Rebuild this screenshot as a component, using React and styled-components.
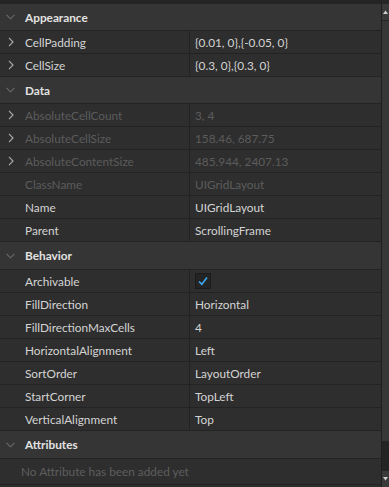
import React from 'react';
import styled, { createGlobalStyle } from 'styled-components';

const Global = createGlobalStyle`
  html, body { margin: 0; padding: 0; background: #2e2e2e; }
  body { font-family: "Lato", "Liberation Sans", sans-serif; }
`;

const Panel = styled.div`
  width: 389px;
  height: 487px;
  display: flex;
  overflow: hidden;
  background: #2e2e2e;
`;

const List = styled.div`
  flex: 1;
  display: flex;
  flex-direction: column;
  border-top: 4px solid #242424;
  border-right: 1px solid #1f1f1f;
`;

const Header = styled.div`
  height: ${p => (p.$tall ? '27px' : '26px')};
  display: flex;
  align-items: center;
  background: #353535;
  border-bottom: 1px solid #232323;
  color: #e2e2e2;
  font-weight: 700;
  font-size: 11.8px;
`;

const Row = styled.div`
  height: 22px;
  display: grid;
  grid-template-columns: 190px 1fr;
  border-bottom: 1px solid #232323;
  font-size: 11.8px;
  color: ${p => (p.$disabled ? '#5c5c5c' : '#d4d4d4')};
`;

const NameCell = styled.div`
  display: flex;
  align-items: center;
  border-right: 1px solid #232323;
  white-space: nowrap;
`;

const ValueCell = styled.div`
  display: flex;
  align-items: center;
  padding-left: 5px;
  white-space: nowrap;
`;

const Twisty = styled.span`
  width: 25px;
  display: flex;
  align-items: center;
  justify-content: center;
  padding-right: 4px;
  box-sizing: border-box;
  color: ${p => (p.$dim ? '#6a6a6a' : '#a8a8a8')};
`;

const Note = styled.div`
  height: 25px;
  display: flex;
  align-items: center;
  padding-left: 21px;
  font-size: 11.8px;
  color: #5e5e5e;
  border-bottom: 1px solid #232323;
`;

const Check = styled.span`
  width: 14px;
  height: 14px;
  display: flex;
  align-items: center;
  justify-content: center;
  background: #242424;
  border: 1px solid #1c1c1c;
`;

const Scrollbar = styled.div`
  width: 7px;
  display: flex;
  flex-direction: column;
  background: #262626;
`;

const ScrollArrow = styled.div`
  height: 16px;
  display: flex;
  align-items: center;
  justify-content: center;
  background: #3a3a3a;
  margin-top: ${p => (p.$top ? '4px' : '0')};
`;

const Thumb = styled.div`
  flex: 1;
  margin-top: 1px;
  background: #373737;
`;

const Track = styled.div`
  height: 30px;
  background: #242424;
`;

const Chevron = ({ open }) =>
  open ? (
    <svg width="9" height="6" viewBox="0 0 9 6" fill="none" stroke="currentColor" strokeWidth="1.1">
      <path d="M0.5 0.8 L4.5 4.8 L8.5 0.8" />
    </svg>
  ) : (
    <svg width="6" height="10" viewBox="0 0 6 10" fill="none" stroke="currentColor" strokeWidth="1.2">
      <path d="M1 0.8 L5 5 L1 9.2" />
    </svg>
  );

const Section = ({ title, tall, children }) => (
  <>
    <Header $tall={tall}>
      <Twisty $dim>
        <Chevron open />
      </Twisty>
      {title}
    </Header>
    {children}
  </>
);

const Prop = ({ name, value, expand, disabled }) => (
  <Row $disabled={disabled}>
    <NameCell>
      <Twisty>{expand && <Chevron />}</Twisty>
      {name}
    </NameCell>
    <ValueCell>{value}</ValueCell>
  </Row>
);

const CheckBox = () => (
  <Check>
    <svg width="12" height="12" viewBox="0 0 12 12" fill="none" stroke="#3aa9f5" strokeWidth="1.6">
      <path d="M2 6.5 L4.8 9.2 L10 2.6" />
    </svg>
  </Check>
);

const App = () => (
  <Panel>
    <Global />
    <List>
      <Section title="Appearance">
        <Prop name="CellPadding" value="{0.01, 0},{-0.05, 0}" expand />
        <Prop name="CellSize" value="{0.3, 0},{0.3, 0}" expand />
      </Section>
      <Section title="Data">
        <Prop name="AbsoluteCellCount" value="3, 4" expand disabled />
        <Prop name="AbsoluteCellSize" value="158.46, 687.75" expand disabled />
        <Prop name="AbsoluteContentSize" value="485.944, 2407.13" expand disabled />
        <Prop name="ClassName" value="UIGridLayout" disabled />
        <Prop name="Name" value="UIGridLayout" />
        <Prop name="Parent" value="ScrollingFrame" />
      </Section>
      <Section title="Behavior" tall>
        <Prop name="Archivable" value={<CheckBox />} />
        <Prop name="FillDirection" value="Horizontal" />
        <Prop name="FillDirectionMaxCells" value="4" />
        <Prop name="HorizontalAlignment" value="Left" />
        <Prop name="SortOrder" value="LayoutOrder" />
        <Prop name="StartCorner" value="TopLeft" />
        <Prop name="VerticalAlignment" value="Top" />
      </Section>
      <Section title="Attributes" tall>
        <Note>No Attribute has been added yet</Note>
      </Section>
    </List>
    <Scrollbar>
      <ScrollArrow $top>
        <svg width="5" height="4" viewBox="0 0 5 4"><path d="M0 4 L2.5 0.5 L5 4 Z" fill="#cfcfcf" /></svg>
      </ScrollArrow>
      <Thumb />
      <Track />
      <ScrollArrow>
        <svg width="5" height="4" viewBox="0 0 5 4"><path d="M0 0 L2.5 3.5 L5 0 Z" fill="#cfcfcf" /></svg>
      </ScrollArrow>
    </Scrollbar>
  </Panel>
);

export default App;
